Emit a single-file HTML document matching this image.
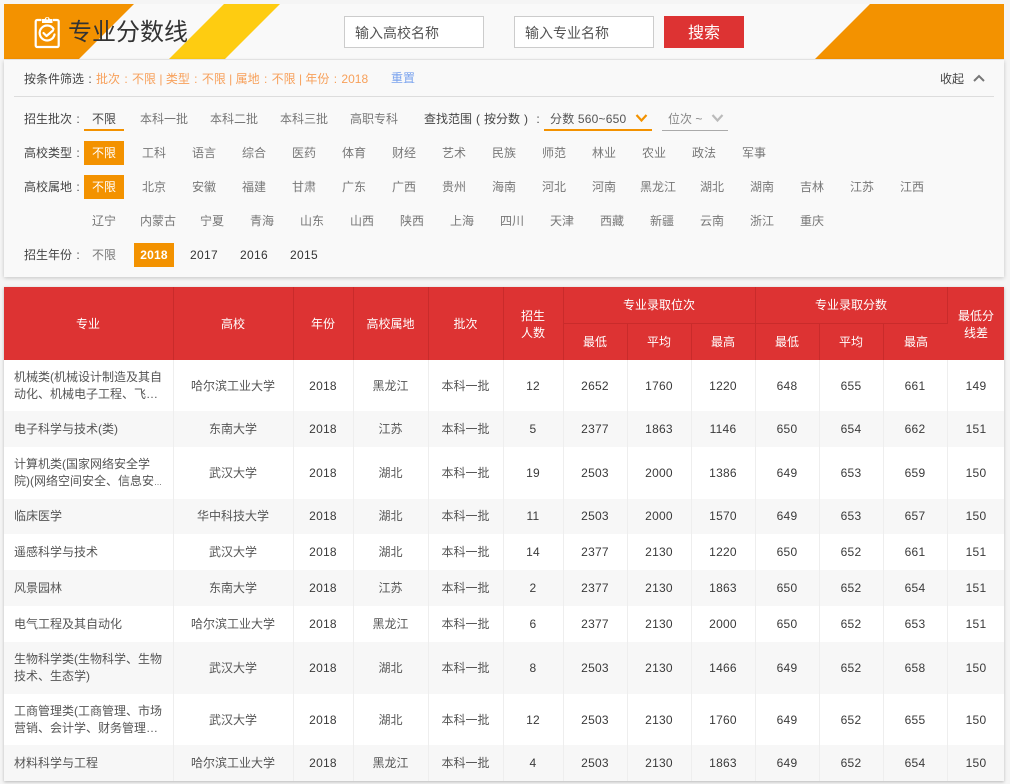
<!DOCTYPE html>
<html lang="zh"><head><meta charset="utf-8"><title>专业分数线</title>
<style>
*{box-sizing:border-box}
html,body{margin:0;padding:0}
body{width:1010px;height:784px;overflow:hidden;background:#f5f5f5;position:relative;font-family:"Liberation Sans","Noto Sans CJK SC",sans-serif;font-size:12px;color:#555}
.a{position:absolute;white-space:nowrap}
.c{display:inline-block;width:12px;text-align:center}
#head{position:absolute;left:4px;top:4px;width:1000px;height:56px;background:#f9f9f9;border-bottom:1px solid #eee}
#panel{position:absolute;left:4px;top:60px;width:1000px;height:217px;background:#f9f9f9;box-shadow:0 1px 4px rgba(0,0,0,.2)}
.inp{position:absolute;top:16px;width:140px;height:32px;background:#fff;border:1px solid #ccc;font-size:14px;line-height:32px;padding-left:10px;color:#555}
.btn{position:absolute;left:664px;top:16px;width:80px;height:32px;background:#dd3333;color:#fff;font-size:16px;line-height:35px;text-align:center}
.row{position:absolute;left:84px;display:flex;height:24px;line-height:24px;color:#777}
.row span{display:block;min-width:40px;padding:0 6px;margin-right:10px;text-align:center;white-space:nowrap}
.row span.on{background:#f39200;color:#fff}
.row span.u{color:#444;border-bottom:2px solid #f39200;height:26px}
.row span.d{color:#333;letter-spacing:.3px}
.lb{position:absolute;left:24px;color:#444;line-height:24px;white-space:nowrap}
#tw{position:absolute;left:4px;top:287px;width:1000px;height:494px;box-shadow:0 1px 3px rgba(0,0,0,.25);background:#fff}
table{border-collapse:separate;border-spacing:0;table-layout:fixed;width:1000px;font-size:12px}
th{background:#dd3333;color:#fff;font-weight:normal;text-align:center;padding:0 1px 0 0;border-right:1px solid #c92b2b;line-height:17px}
th[rowspan]{padding-top:2px}
th.b{border-bottom:1px solid #c92b2b}
tr>th:last-child{border-right:0;padding-right:0}
td{padding:0 1px 0 0;text-align:center;border-right:1px solid #eee;color:#3a3a3a;letter-spacing:.25px;line-height:17px}
td.zh{letter-spacing:0;color:#555}
td:first-child{text-align:left;padding:0 10px;letter-spacing:0;color:#555}
td:last-child{border-right:0;padding-right:0}
tr.p td{padding-top:1px}
tr.e td{background:#f7f7f7}
.cl{white-space:nowrap}
.el{font-size:8px}
</style></head><body>
<div id="head"></div>
<svg class="a" style="left:0;top:0" width="1010" height="60" viewBox="0 0 1010 60">
<polygon points="4,4 134,4 79,59 4,59" fill="#f39200"/>
<polygon points="224,4 280,4 225,59 169,59" fill="#fecc11"/>
<polygon points="870,4 1004,4 1004,59 815,59" fill="#f39200"/>
<g fill="none" stroke="#fff" stroke-width="2.2">
<path d="M41.500 20h-4.300a1.500 1.500 0 0 0-1.500 1.500v24a1.500 1.500 0 0 0 1.500 1.500h20a1.500 1.500 0 0 0 1.500-1.500v-24a1.500 1.500 0 0 0-1.500-1.500H53"/>
<path d="M53.500 29a7.500 7.500 0 1 0 1 5.500" stroke-linecap="round"/>
<path d="M43.500 33l3 3 6.500-5.500" stroke-linecap="round" stroke-linejoin="round"/>
</g>
<path d="M42 23v-4h2.800a2.500 2.500 0 0 1 4.900 0h2.800v4z" fill="#fff"/>
<circle cx="47.200" cy="18.600" r="1" fill="#f39200"/>
</svg>
<div class="a" style="left:68px;top:15px;font-size:24px;line-height:36px;color:#333">专业分数线</div>
<div class="inp" style="left:344px">输入高校名称</div>
<div class="inp" style="left:514px">输入专业名称</div>
<div class="btn">搜索</div>

<div id="panel"></div>
<div class="a" style="left:24px;top:70px;line-height:18px;color:#444">按条件筛选<span class="c">:</span><span style="color:#f7a05a">批次<span class="c">:</span>不限 | 类型<span class="c">:</span>不限 | 属地<span class="c">:</span>不限 | 年份<span class="c">:</span>2018</span></div>
<div class="a" style="left:391px;top:69px;line-height:18px;color:#7aa3ee">重置</div>
<div class="a" style="left:940px;top:70px;line-height:18px;color:#444">收起</div>
<svg class="a" style="left:972px;top:72px" width="14" height="12"><path d="M2 9l5-5 5 5" fill="none" stroke="#777" stroke-width="2"/></svg>
<div class="a" style="left:14px;top:96px;width:980px;height:1px;background:#ddd"></div>

<div class="lb" style="top:107px">招生批次<span class="c">:</span></div>
<div class="row" style="top:105px;height:26px;line-height:28px"><span class="u">不限</span><span>本科一批</span><span>本科二批</span><span>本科三批</span><span>高职专科</span></div>
<div class="lb" style="left:424px;top:107px">查找范围<span class="c">(</span>按分数<span class="c">)</span><span class="c">:</span></div>
<div class="a" style="left:544px;top:107px;width:108px;height:24px;line-height:24px;border-bottom:2px solid #f39200;padding-left:6px;color:#555;letter-spacing:.2px">分数 560~650</div>
<svg class="a" style="left:635px;top:113px" width="15" height="11"><path d="M1.500 2l5 5.500 5-5.500" fill="none" stroke="#f39200" stroke-width="2.200"/></svg>
<div class="a" style="left:662px;top:107px;width:66px;height:24px;line-height:24px;border-bottom:1px solid #aaa;padding-left:6px;color:#888">位次 ~</div>
<svg class="a" style="left:711px;top:113px" width="15" height="11"><path d="M1.500 2l5 5.500 5-5.500" fill="none" stroke="#bbb" stroke-width="2.200"/></svg>

<div class="lb" style="top:141px">高校类型<span class="c">:</span></div>
<div class="row" style="top:141px"><span class="on">不限</span><span>工科</span><span>语言</span><span>综合</span><span>医药</span><span>体育</span><span>财经</span><span>艺术</span><span>民族</span><span>师范</span><span>林业</span><span>农业</span><span>政法</span><span>军事</span></div>
<div class="lb" style="top:175px">高校属地<span class="c">:</span></div>
<div class="row" style="top:175px"><span class="on">不限</span><span>北京</span><span>安徽</span><span>福建</span><span>甘肃</span><span>广东</span><span>广西</span><span>贵州</span><span>海南</span><span>河北</span><span>河南</span><span>黑龙江</span><span>湖北</span><span>湖南</span><span>吉林</span><span>江苏</span><span>江西</span></div>
<div class="row" style="top:209px"><span>辽宁</span><span>内蒙古</span><span>宁夏</span><span>青海</span><span>山东</span><span>山西</span><span>陕西</span><span>上海</span><span>四川</span><span>天津</span><span>西藏</span><span>新疆</span><span>云南</span><span>浙江</span><span>重庆</span></div>
<div class="lb" style="top:243px">招生年份<span class="c">:</span></div>
<div class="row" style="top:243px"><span>不限</span><span class="on" style="font-weight:bold;letter-spacing:.2px">2018</span><span class="d">2017</span><span class="d">2016</span><span class="d">2015</span></div>

<div id="tw">
<table>
<colgroup><col style="width:170px"><col style="width:120px"><col style="width:60px"><col style="width:75px"><col style="width:75px"><col style="width:60px"><col style="width:64px"><col style="width:64px"><col style="width:64px"><col style="width:64px"><col style="width:64px"><col style="width:64px"><col style="width:56px"></colgroup>
<tr style="height:37px"><th rowspan="2">专业</th><th rowspan="2">高校</th><th rowspan="2">年份</th><th rowspan="2">高校属地</th><th rowspan="2">批次</th><th rowspan="2">招生<br>人数</th><th colspan="3" class="b">专业录取位次</th><th colspan="3" class="b">专业录取分数</th><th rowspan="2">最低分<br>线差</th></tr>
<tr style="height:36px"><th>最低</th><th>平均</th><th>最高</th><th>最低</th><th>平均</th><th>最高</th></tr>
<tr class="p" style="height:51px"><td><div class="cl">机械类(机械设计制造及其自<br>动化、机械电子工程、飞…</div></td><td class="zh">哈尔滨工业大学</td><td>2018</td><td class="zh">黑龙江</td><td class="zh">本科一批</td><td>12</td><td>2652</td><td>1760</td><td>1220</td><td>648</td><td>655</td><td>661</td><td>149</td></tr>
<tr class="e" style="height:36px"><td>电子科学与技术(类)</td><td class="zh">东南大学</td><td>2018</td><td class="zh">江苏</td><td class="zh">本科一批</td><td>5</td><td>2377</td><td>1863</td><td>1146</td><td>650</td><td>654</td><td>662</td><td>151</td></tr>
<tr style="height:52px"><td><div class="cl">计算机类(国家网络安全学<br>院)(网络空间安全、信息安<span class="el">…</span></div></td><td class="zh">武汉大学</td><td>2018</td><td class="zh">湖北</td><td class="zh">本科一批</td><td>19</td><td>2503</td><td>2000</td><td>1386</td><td>649</td><td>653</td><td>659</td><td>150</td></tr>
<tr class="e" style="height:35px"><td>临床医学</td><td class="zh">华中科技大学</td><td>2018</td><td class="zh">湖北</td><td class="zh">本科一批</td><td>11</td><td>2503</td><td>2000</td><td>1570</td><td>649</td><td>653</td><td>657</td><td>150</td></tr>
<tr style="height:36px"><td>遥感科学与技术</td><td class="zh">武汉大学</td><td>2018</td><td class="zh">湖北</td><td class="zh">本科一批</td><td>14</td><td>2377</td><td>2130</td><td>1220</td><td>650</td><td>652</td><td>661</td><td>151</td></tr>
<tr class="e" style="height:36px"><td>风景园林</td><td class="zh">东南大学</td><td>2018</td><td class="zh">江苏</td><td class="zh">本科一批</td><td>2</td><td>2377</td><td>2130</td><td>1863</td><td>650</td><td>652</td><td>654</td><td>151</td></tr>
<tr style="height:36px"><td>电气工程及其自动化</td><td class="zh">哈尔滨工业大学</td><td>2018</td><td class="zh">黑龙江</td><td class="zh">本科一批</td><td>6</td><td>2377</td><td>2130</td><td>2000</td><td>650</td><td>652</td><td>653</td><td>151</td></tr>
<tr class="e" style="height:52px"><td><div class="cl">生物科学类(生物科学、生物<br>技术、生态学)</div></td><td class="zh">武汉大学</td><td>2018</td><td class="zh">湖北</td><td class="zh">本科一批</td><td>8</td><td>2503</td><td>2130</td><td>1466</td><td>649</td><td>652</td><td>658</td><td>150</td></tr>
<tr class="p" style="height:51px"><td><div class="cl">工商管理类(工商管理、市场<br>营销、会计学、财务管理…</div></td><td class="zh">武汉大学</td><td>2018</td><td class="zh">湖北</td><td class="zh">本科一批</td><td>12</td><td>2503</td><td>2130</td><td>1760</td><td>649</td><td>652</td><td>655</td><td>150</td></tr>
<tr class="e" style="height:36px"><td>材料科学与工程</td><td class="zh">哈尔滨工业大学</td><td>2018</td><td class="zh">黑龙江</td><td class="zh">本科一批</td><td>4</td><td>2503</td><td>2130</td><td>1863</td><td>649</td><td>652</td><td>654</td><td>150</td></tr>
</table>
</div>
</body></html>
